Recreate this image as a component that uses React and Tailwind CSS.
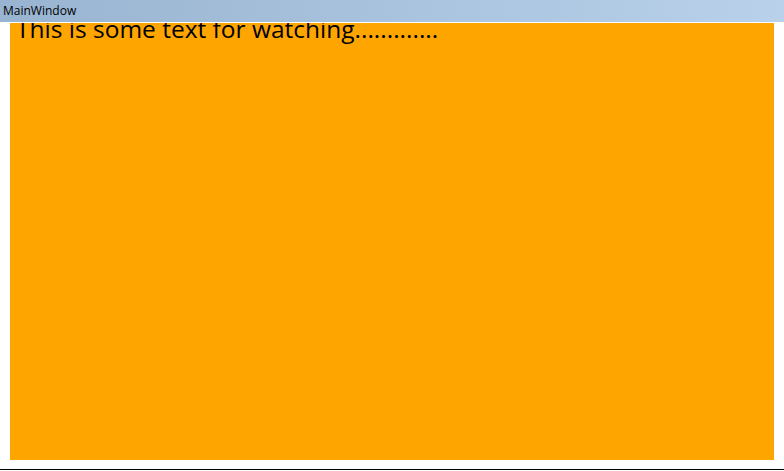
export default function App() {
  return (
    <div className="w-[784px] h-[471px] bg-white flex flex-col overflow-hidden" style={{ fontFamily: '"Open Sans", "Noto Sans", sans-serif' }}>
      <div className="h-[22px] shrink-0 bg-gradient-to-r from-[#99b4d1] to-[#b9d1ea] flex items-center pl-[3px] text-[12px] text-black leading-none">
        MainWindow
      </div>
      <div className="h-px shrink-0 bg-white" />
      <div className="flex-1 flex flex-col">
        <div className="ml-[10px] w-[764px] h-[437px] bg-[#ffa500] overflow-hidden">
          <div className="pl-[6px] mt-[-10px] text-[24.5px] leading-[32px] text-black">
            This is some text for watching.............
          </div>
        </div>
        <div className="flex-1" />
        <div className="h-px bg-black mb-px" />
      </div>
    </div>
  );
}
